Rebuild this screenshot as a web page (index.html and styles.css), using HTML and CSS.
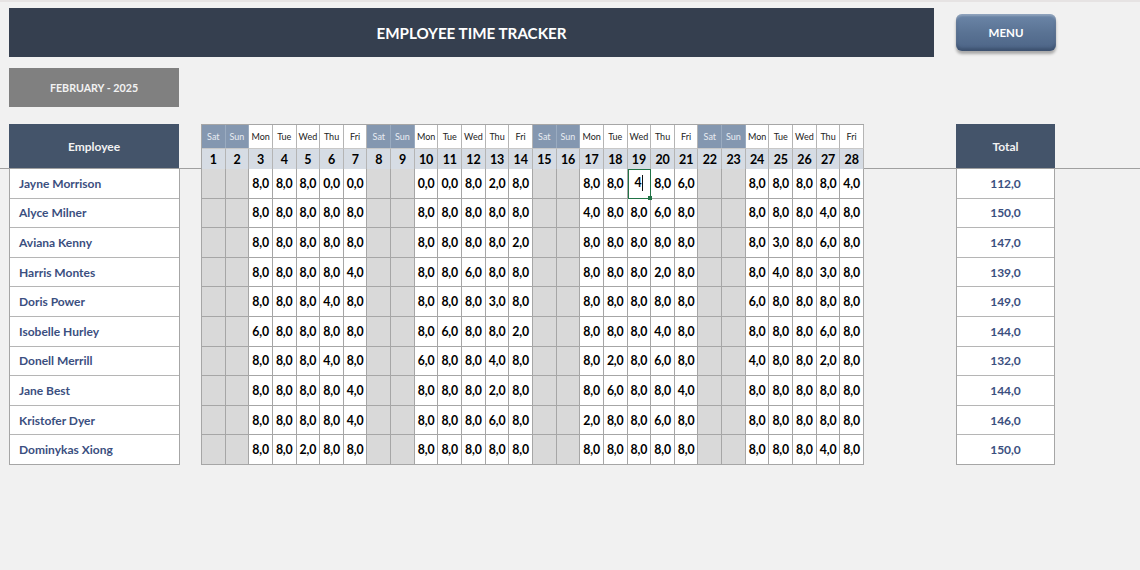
FILE: index.html
```html
<!DOCTYPE html>
<html lang="en">
<head>
<meta charset="UTF-8">
<title>Employee Time Tracker</title>
<link rel="stylesheet" href="styles.css">
</head>
<body>
<div class="top-bar">
    <div class="title">EMPLOYEE TIME TRACKER</div>
    <button class="menu-btn">MENU</button>
</div>
<div class="month">FEBRUARY - 2025</div>

<div class="tracker-head">
    <div class="emp-head">Employee</div>
    <div class="days-head">
        <div class="wd off">Sat</div><div class="wd off">Sun</div><div class="wd">Mon</div><div class="wd">Tue</div><div class="wd">Wed</div><div class="wd">Thu</div><div class="wd">Fri</div>
        <div class="wd off">Sat</div><div class="wd off">Sun</div><div class="wd">Mon</div><div class="wd">Tue</div><div class="wd">Wed</div><div class="wd">Thu</div><div class="wd">Fri</div>
        <div class="wd off">Sat</div><div class="wd off">Sun</div><div class="wd">Mon</div><div class="wd">Tue</div><div class="wd">Wed</div><div class="wd">Thu</div><div class="wd">Fri</div>
        <div class="wd off">Sat</div><div class="wd off">Sun</div><div class="wd">Mon</div><div class="wd">Tue</div><div class="wd">Wed</div><div class="wd">Thu</div><div class="wd">Fri</div>
        <div class="dn">1</div><div class="dn">2</div><div class="dn">3</div><div class="dn">4</div><div class="dn">5</div><div class="dn">6</div><div class="dn">7</div>
        <div class="dn">8</div><div class="dn">9</div><div class="dn">10</div><div class="dn">11</div><div class="dn">12</div><div class="dn">13</div><div class="dn">14</div>
        <div class="dn">15</div><div class="dn">16</div><div class="dn">17</div><div class="dn">18</div><div class="dn">19</div><div class="dn">20</div><div class="dn">21</div>
        <div class="dn">22</div><div class="dn">23</div><div class="dn">24</div><div class="dn">25</div><div class="dn">26</div><div class="dn">27</div><div class="dn">28</div>
    </div>
    <div class="total-head">Total</div>
</div>

<div class="tracker-body">
    <div class="emp-list">
        <div class="name">Jayne Morrison</div>
        <div class="name">Alyce Milner</div>
        <div class="name">Aviana Kenny</div>
        <div class="name">Harris Montes</div>
        <div class="name">Doris Power</div>
        <div class="name">Isobelle Hurley</div>
        <div class="name">Donell Merrill</div>
        <div class="name">Jane Best</div>
        <div class="name">Kristofer Dyer</div>
        <div class="name">Dominykas Xiong</div>
    </div>
    <div class="days-grid">
        <!-- Jayne Morrison -->
        <div class="c off"></div><div class="c off"></div><div class="c">8,0</div><div class="c">8,0</div><div class="c">8,0</div><div class="c">0,0</div><div class="c">0,0</div>
        <div class="c off"></div><div class="c off"></div><div class="c">0,0</div><div class="c">0,0</div><div class="c">8,0</div><div class="c">2,0</div><div class="c">8,0</div>
        <div class="c off"></div><div class="c off"></div><div class="c">8,0</div><div class="c">8,0</div><div class="c editing"><span class="caret">4</span></div><div class="c">8,0</div><div class="c">6,0</div>
        <div class="c off"></div><div class="c off"></div><div class="c">8,0</div><div class="c">8,0</div><div class="c">8,0</div><div class="c">8,0</div><div class="c">4,0</div>
        <!-- Alyce Milner -->
        <div class="c off"></div><div class="c off"></div><div class="c">8,0</div><div class="c">8,0</div><div class="c">8,0</div><div class="c">8,0</div><div class="c">8,0</div>
        <div class="c off"></div><div class="c off"></div><div class="c">8,0</div><div class="c">8,0</div><div class="c">8,0</div><div class="c">8,0</div><div class="c">8,0</div>
        <div class="c off"></div><div class="c off"></div><div class="c">4,0</div><div class="c">8,0</div><div class="c">8,0</div><div class="c">6,0</div><div class="c">8,0</div>
        <div class="c off"></div><div class="c off"></div><div class="c">8,0</div><div class="c">8,0</div><div class="c">8,0</div><div class="c">4,0</div><div class="c">8,0</div>
        <!-- Aviana Kenny -->
        <div class="c off"></div><div class="c off"></div><div class="c">8,0</div><div class="c">8,0</div><div class="c">8,0</div><div class="c">8,0</div><div class="c">8,0</div>
        <div class="c off"></div><div class="c off"></div><div class="c">8,0</div><div class="c">8,0</div><div class="c">8,0</div><div class="c">8,0</div><div class="c">2,0</div>
        <div class="c off"></div><div class="c off"></div><div class="c">8,0</div><div class="c">8,0</div><div class="c">8,0</div><div class="c">8,0</div><div class="c">8,0</div>
        <div class="c off"></div><div class="c off"></div><div class="c">8,0</div><div class="c">3,0</div><div class="c">8,0</div><div class="c">6,0</div><div class="c">8,0</div>
        <!-- Harris Montes -->
        <div class="c off"></div><div class="c off"></div><div class="c">8,0</div><div class="c">8,0</div><div class="c">8,0</div><div class="c">8,0</div><div class="c">4,0</div>
        <div class="c off"></div><div class="c off"></div><div class="c">8,0</div><div class="c">8,0</div><div class="c">6,0</div><div class="c">8,0</div><div class="c">8,0</div>
        <div class="c off"></div><div class="c off"></div><div class="c">8,0</div><div class="c">8,0</div><div class="c">8,0</div><div class="c">2,0</div><div class="c">8,0</div>
        <div class="c off"></div><div class="c off"></div><div class="c">8,0</div><div class="c">4,0</div><div class="c">8,0</div><div class="c">3,0</div><div class="c">8,0</div>
        <!-- Doris Power -->
        <div class="c off"></div><div class="c off"></div><div class="c">8,0</div><div class="c">8,0</div><div class="c">8,0</div><div class="c">4,0</div><div class="c">8,0</div>
        <div class="c off"></div><div class="c off"></div><div class="c">8,0</div><div class="c">8,0</div><div class="c">8,0</div><div class="c">3,0</div><div class="c">8,0</div>
        <div class="c off"></div><div class="c off"></div><div class="c">8,0</div><div class="c">8,0</div><div class="c">8,0</div><div class="c">8,0</div><div class="c">8,0</div>
        <div class="c off"></div><div class="c off"></div><div class="c">6,0</div><div class="c">8,0</div><div class="c">8,0</div><div class="c">8,0</div><div class="c">8,0</div>
        <!-- Isobelle Hurley -->
        <div class="c off"></div><div class="c off"></div><div class="c">6,0</div><div class="c">8,0</div><div class="c">8,0</div><div class="c">8,0</div><div class="c">8,0</div>
        <div class="c off"></div><div class="c off"></div><div class="c">8,0</div><div class="c">6,0</div><div class="c">8,0</div><div class="c">8,0</div><div class="c">2,0</div>
        <div class="c off"></div><div class="c off"></div><div class="c">8,0</div><div class="c">8,0</div><div class="c">8,0</div><div class="c">4,0</div><div class="c">8,0</div>
        <div class="c off"></div><div class="c off"></div><div class="c">8,0</div><div class="c">8,0</div><div class="c">8,0</div><div class="c">6,0</div><div class="c">8,0</div>
        <!-- Donell Merrill -->
        <div class="c off"></div><div class="c off"></div><div class="c">8,0</div><div class="c">8,0</div><div class="c">8,0</div><div class="c">4,0</div><div class="c">8,0</div>
        <div class="c off"></div><div class="c off"></div><div class="c">6,0</div><div class="c">8,0</div><div class="c">8,0</div><div class="c">4,0</div><div class="c">8,0</div>
        <div class="c off"></div><div class="c off"></div><div class="c">8,0</div><div class="c">2,0</div><div class="c">8,0</div><div class="c">6,0</div><div class="c">8,0</div>
        <div class="c off"></div><div class="c off"></div><div class="c">4,0</div><div class="c">8,0</div><div class="c">8,0</div><div class="c">2,0</div><div class="c">8,0</div>
        <!-- Jane Best -->
        <div class="c off"></div><div class="c off"></div><div class="c">8,0</div><div class="c">8,0</div><div class="c">8,0</div><div class="c">8,0</div><div class="c">4,0</div>
        <div class="c off"></div><div class="c off"></div><div class="c">8,0</div><div class="c">8,0</div><div class="c">8,0</div><div class="c">2,0</div><div class="c">8,0</div>
        <div class="c off"></div><div class="c off"></div><div class="c">8,0</div><div class="c">6,0</div><div class="c">8,0</div><div class="c">8,0</div><div class="c">4,0</div>
        <div class="c off"></div><div class="c off"></div><div class="c">8,0</div><div class="c">8,0</div><div class="c">8,0</div><div class="c">8,0</div><div class="c">8,0</div>
        <!-- Kristofer Dyer -->
        <div class="c off"></div><div class="c off"></div><div class="c">8,0</div><div class="c">8,0</div><div class="c">8,0</div><div class="c">8,0</div><div class="c">4,0</div>
        <div class="c off"></div><div class="c off"></div><div class="c">8,0</div><div class="c">8,0</div><div class="c">8,0</div><div class="c">6,0</div><div class="c">8,0</div>
        <div class="c off"></div><div class="c off"></div><div class="c">2,0</div><div class="c">8,0</div><div class="c">8,0</div><div class="c">6,0</div><div class="c">8,0</div>
        <div class="c off"></div><div class="c off"></div><div class="c">8,0</div><div class="c">8,0</div><div class="c">8,0</div><div class="c">8,0</div><div class="c">8,0</div>
        <!-- Dominykas Xiong -->
        <div class="c off"></div><div class="c off"></div><div class="c">8,0</div><div class="c">8,0</div><div class="c">2,0</div><div class="c">8,0</div><div class="c">8,0</div>
        <div class="c off"></div><div class="c off"></div><div class="c">8,0</div><div class="c">8,0</div><div class="c">8,0</div><div class="c">8,0</div><div class="c">8,0</div>
        <div class="c off"></div><div class="c off"></div><div class="c">8,0</div><div class="c">8,0</div><div class="c">8,0</div><div class="c">8,0</div><div class="c">8,0</div>
        <div class="c off"></div><div class="c off"></div><div class="c">8,0</div><div class="c">8,0</div><div class="c">8,0</div><div class="c">4,0</div><div class="c">8,0</div>
    </div>
    <div class="total-list">
        <div class="total">112,0</div>
        <div class="total">150,0</div>
        <div class="total">147,0</div>
        <div class="total">139,0</div>
        <div class="total">149,0</div>
        <div class="total">144,0</div>
        <div class="total">132,0</div>
        <div class="total">144,0</div>
        <div class="total">146,0</div>
        <div class="total">150,0</div>
    </div>
</div>
</body>
</html>
```

FILE: styles.css
```css
* {
    box-sizing: border-box;
}

body {
    margin: 0;
    height: 570px;
    overflow: hidden;
    background-color: #f1f1f1;
    border-top: 2px solid #e6e3e3;
    font-family: Lato, "Open Sans", sans-serif;
    font-weight: bold;
}

.top-bar {
    display: flex;
    align-items: flex-start;
    padding: 6px 0 0 9px;
}

.title {
    width: 925px;
    height: 49px;
    display: flex;
    align-items: center;
    justify-content: center;
    background-color: #353f4f;
    color: #fff;
    font-size: 15.2px;
}

.menu-btn {
    width: 100px;
    height: 37px;
    margin: 6px 0 0 22px;
    border: none;
    border-radius: 6px;
    background: linear-gradient(#6c86a8, #5a7394 50%, #4c6486);
    box-shadow: inset 0 2px 2px rgba(255, 255, 255, 0.25), inset 0 -3px 3px rgba(40, 55, 80, 0.4), 0 3px 3px rgba(0, 0, 0, 0.3);
    color: #fff;
    font-family: inherit;
    font-weight: bold;
    font-size: 11.5px;
}

.month {
    width: 170px;
    height: 39px;
    margin: 11px 0 17px 9px;
    display: flex;
    align-items: center;
    justify-content: center;
    background-color: #808080;
    color: #f2f2f2;
    font-size: 10.7px;
}

.tracker-head {
    display: flex;
    height: 45px;
    padding-left: 9px;
    border-bottom: 1px solid #a0a0a0;
}

.emp-head,
.total-head {
    display: flex;
    align-items: center;
    justify-content: center;
    background-color: #44546a;
    color: #f2f2f2;
    font-size: 12px;
}

.emp-head {
    width: 170px;
    margin-right: 22px;
}

.total-head {
    width: 99px;
    margin-left: 92px;
}

.days-head {
    width: 663px;
    display: grid;
    grid-template-columns: repeat(28, 1fr);
    grid-template-rows: 23px 21px;
    border-left: 1px solid #a6a6a6;
    border-top: 1px solid #a6a6a6;
}

.wd,
.dn {
    display: flex;
    align-items: center;
    justify-content: center;
    border-right: 1px solid #b5b5b5;
}

.wd {
    background-color: #fff;
    color: #222;
    font-size: 9px;
    font-weight: normal;
}

.wd.off {
    background-color: #8497b0;
    color: #e8ecf2;
    border-right-color: #9aabc0;
}

.dn {
    background-color: #d6dce4;
    color: #000;
    font-size: 12.5px;
    letter-spacing: -0.2px;
    border-top: 1px solid #c8c8c8;
}

.tracker-body {
    display: flex;
    padding-left: 9px;
}

.emp-list {
    width: 171px;
    margin-right: 21px;
    border: 1px solid #a6a6a6;
    border-top: none;
    background-color: #fff;
}

.name,
.total {
    height: 29.6px;
    display: flex;
    align-items: center;
    color: #3b4f80;
    font-size: 12px;
    border-bottom: 1px solid #b5b5b5;
}

.name:last-child,
.total:last-child {
    height: 28.6px;
    border-bottom: none;
}

.name {
    padding-left: 9px;
}

.days-grid {
    width: 663px;
    display: grid;
    grid-template-columns: repeat(28, 1fr);
    grid-auto-rows: 29.6px;
    border-left: 1px solid #a6a6a6;
}

.c {
    display: flex;
    align-items: center;
    justify-content: center;
    background-color: #fff;
    border-right: 1px solid #a6a6a6;
    border-bottom: 1px solid #a6a6a6;
    color: #000;
    font-size: 12.3px;
    letter-spacing: -0.15px;
}

.c.off {
    background-color: #d9d9d9;
}

.c.editing {
    position: relative;
    outline: 1.5px solid #217346;
    outline-offset: -1px;
}

/* little fill handle on the active cell */
.c.editing::after {
    content: "";
    position: absolute;
    right: -2px;
    bottom: -2px;
    width: 4px;
    height: 4px;
    background-color: #217346;
}

.caret {
    padding-right: 1px;
    border-right: 1px solid #111;
    line-height: 16px;
}

.total-list {
    width: 99px;
    margin-left: 92px;
    border: 1px solid #a6a6a6;
    border-top: none;
    background-color: #fff;
}

.total {
    justify-content: center;
}
```
